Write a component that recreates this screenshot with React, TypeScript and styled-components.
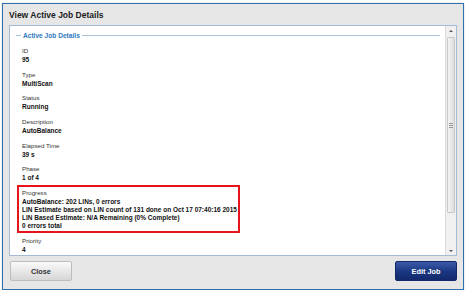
import React from "react";
import styled, { createGlobalStyle } from "styled-components";

interface FieldItem {
  label: string;
  values: string[];
  highlight?: boolean;
}

const fields: FieldItem[] = [
  { label: "ID", values: ["95"] },
  { label: "Type", values: ["MultiScan"] },
  { label: "Status", values: ["Running"] },
  { label: "Description", values: ["AutoBalance"] },
  { label: "Elapsed Time", values: ["39 s"] },
  { label: "Phase", values: ["1 of 4"] },
  {
    label: "Progress",
    values: [
      "AutoBalance: 202 LINs, 0 errors",
      "LIN Estimate based on LIN count of 131 done on Oct 17 07:40:16 2015",
      "LIN Based Estimate: N/A Remaining (0% Complete)",
      "0 errors total",
    ],
    highlight: true,
  },
  { label: "Priority", values: ["4"] },
];

const GlobalStyle = createGlobalStyle`
  html, body {
    margin: 0;
    background: #ffffff;
    font-family: "Liberation Sans", Arial, sans-serif;
  }
`;

function App() {
  return (
    <>
      <GlobalStyle />
      <Dialog>
        <TitleBar>View Active Job Details</TitleBar>
        <Panel>
          <Content>
            <LegendRow>
              <LegendDash />
              <LegendText>Active Job Details</LegendText>
              <LegendLine />
            </LegendRow>
            <Fields>
              {fields.map((f) => {
                const Wrap = f.highlight ? Highlight : Field;
                return (
                  <Wrap key={f.label}>
                    <Label>{f.label}</Label>
                    {f.values.map((v) => (
                      <Value key={v} $dense={f.values.length > 1}>
                        {v}
                      </Value>
                    ))}
                  </Wrap>
                );
              })}
            </Fields>
          </Content>
          <Scrollbar>
            <Arrow $dir="up" />
            <Track>
              <Thumb>
                <Grip />
              </Thumb>
            </Track>
            <Arrow $dir="down" />
          </Scrollbar>
        </Panel>
        <Footer>
          <Button>Close</Button>
          <Button $primary>Edit Job</Button>
        </Footer>
      </Dialog>
    </>
  );
}

const Dialog = styled.div`
  margin: 3px 0 0 2px;
  width: 462px;
  height: 287px;
  box-sizing: border-box;
  border: 1px solid #2f6fae;
  background: #e6e6e6;
  display: flex;
  flex-direction: column;
  box-shadow: 0 0 1px rgba(0, 0, 0, 0.3);
`;

const TitleBar = styled.div`
  height: 21px;
  padding-left: 6px;
  display: flex;
  align-items: center;
  font-size: 8.5px;
  font-weight: 700;
  color: #1c1c1c;
`;

const Panel = styled.div`
  margin: 0 6px;
  height: 231px;
  box-sizing: border-box;
  border: 1px solid #a3bcd4;
  background: #ffffff;
  display: flex;
`;

const Content = styled.div`
  flex: 1;
  padding: 4px 5px 0 6px;
  overflow: hidden;
`;

const LegendRow = styled.div`
  height: 10px;
  display: flex;
  align-items: center;
`;

const LegendDash = styled.div`
  width: 5px;
  height: 1px;
  background: #a9c3dc;
`;

const LegendText = styled.span`
  padding: 0 2px;
  font-size: 6.6px;
  font-weight: 700;
  color: #2f78bd;
`;

const LegendLine = styled.div`
  flex: 1;
  height: 1px;
  background: #a9c3dc;
`;

const Fields = styled.div`
  margin-top: 5px;
  padding-left: 6px;
`;

const Field = styled.div`
  margin-bottom: 4.7px;
`;

const Highlight = styled.div`
  width: 223px;
  box-sizing: border-box;
  margin: -2px 0 2px -5px;
  padding: 0 3px 2px 3px;
  border: 2px solid #e8141c;
`;

const Label = styled.div`
  font-size: 6.2px;
  line-height: 11px;
  color: #333333;
`;

const Value = styled.div<{ $dense?: boolean }>`
  font-size: 6.5px;
  font-weight: 700;
  line-height: ${(p) => (p.$dense ? "7.8px" : "8px")};
  color: #111111;
  white-space: nowrap;
`;

const Scrollbar = styled.div`
  width: 10px;
  display: flex;
  flex-direction: column;
  background: #f0f0f0;
  border-left: 1px solid #dcdcdc;
`;

const Arrow = styled.div<{ $dir: "up" | "down" }>`
  height: 9px;
  display: flex;
  align-items: center;
  justify-content: center;

  &::after {
    content: "";
    width: 0;
    height: 0;
    border-left: 2px solid transparent;
    border-right: 2px solid transparent;
    ${(p) =>
      p.$dir === "up"
        ? "border-bottom: 2px solid #555;"
        : "border-top: 2px solid #555;"}
  }
`;

const Track = styled.div`
  flex: 1;
  padding: 2px 1px 0 1px;
`;

const Thumb = styled.div`
  height: 176px;
  box-sizing: border-box;
  border: 1px solid #c8c8c8;
  border-radius: 1px;
  background: linear-gradient(to right, #f4f4f4, #dedede);
  display: flex;
  align-items: center;
  justify-content: center;
`;

const Grip = styled.div`
  width: 4px;
  height: 5px;
  background: repeating-linear-gradient(
    to bottom,
    #9a9a9a 0,
    #9a9a9a 1px,
    transparent 1px,
    transparent 2px
  );
`;

const Footer = styled.div`
  flex: 1;
  display: flex;
  justify-content: space-between;
  align-items: flex-start;
  padding: 5px 6px 0 7px;
`;

const Button = styled.button<{ $primary?: boolean }>`
  width: 62px;
  height: 20px;
  padding: 0;
  border-radius: 2px;
  font-family: "Liberation Sans", Arial, sans-serif;
  font-size: 7.3px;
  font-weight: 700;
  cursor: pointer;
  border: 1px solid ${(p) => (p.$primary ? "#12286a" : "#bdbdbd")};
  color: ${(p) => (p.$primary ? "#ffffff" : "#333333")};
  background: ${(p) =>
    p.$primary
      ? "linear-gradient(to bottom, #3a5aa8, #1a3580 55%, #13296c)"
      : "linear-gradient(to bottom, #fafafa, #e6e6e6 55%, #d6d6d6)"};
`;

export default App;
